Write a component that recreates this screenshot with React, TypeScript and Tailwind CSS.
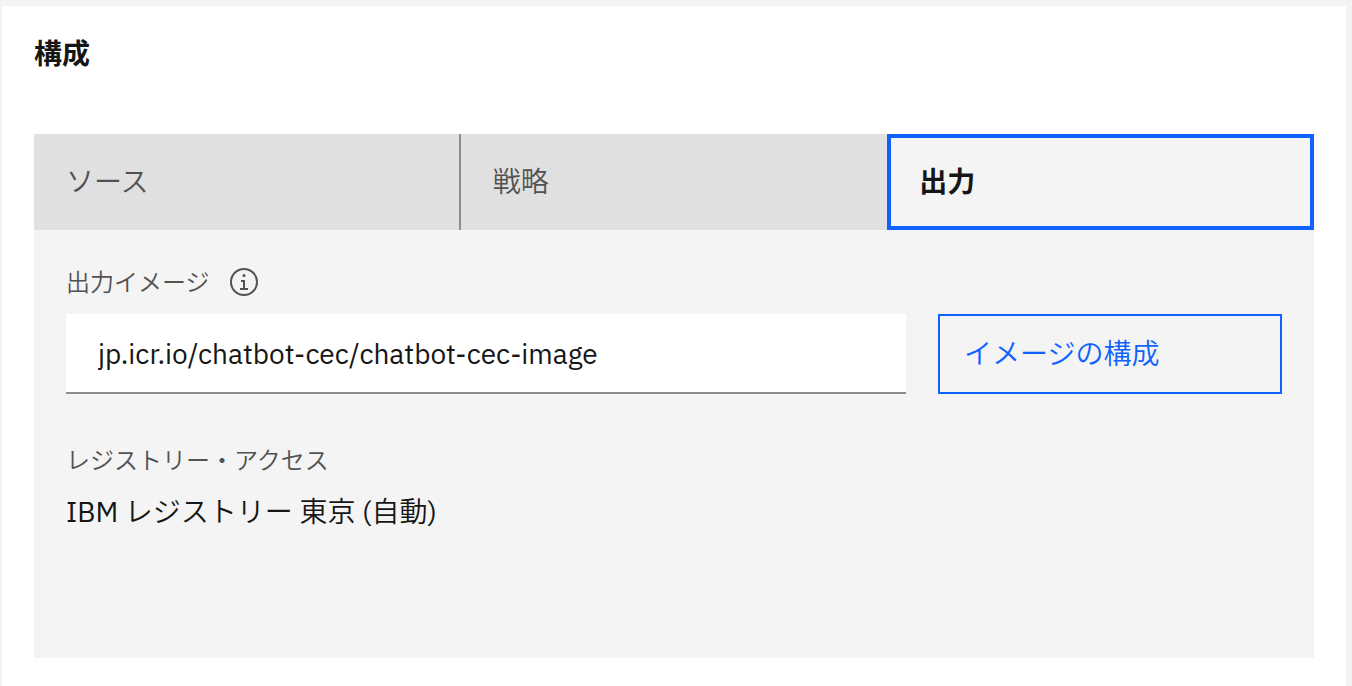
import { useState } from "react";
import clsx from "clsx";

const tabs = [
  { id: "source", label: "ソース" },
  { id: "strategy", label: "戦略" },
  { id: "output", label: "出力" },
];

function InfoIcon() {
  return (
    <svg viewBox="0 0 32 32" className="size-8" fill="currentColor" aria-hidden="true">
      <path d="M17 22v-8h-4v2h2v6h-3v2h8v-2zM16 8a1.5 1.5 0 1 0 1.5 1.5A1.5 1.5 0 0 0 16 8z" />
      <path d="M16 30a14 14 0 1 1 14-14 14 14 0 0 1-14 14zm0-26a12 12 0 1 0 12 12A12 12 0 0 0 16 4z" />
    </svg>
  );
}

function OutputPanel() {
  const [image, setImage] = useState("jp.icr.io/chatbot-cec/chatbot-cec-image");

  return (
    <>
      <div className="mb-4 flex h-8 items-center gap-[18px] text-2xl text-[#525252]">
        <label htmlFor="output-image" className="font-[350]">出力イメージ</label>
        <button type="button" aria-label="出力イメージの情報">
          <InfoIcon />
        </button>
      </div>
      <div className="flex gap-8">
        <input
          id="output-image"
          type="text"
          value={image}
          onChange={(e) => setImage(e.target.value)}
          className="h-20 min-w-0 flex-1 border-b-2 border-[#8d8d8d] bg-white px-8 outline-none"
        />
        <button
          type="button"
          className="h-20 w-[344px] border-2 border-[#0f62fe] px-6 text-left font-[350] text-[#0f62fe]"
        >
          イメージの構成
        </button>
      </div>
      <dl className="mt-12">
        <dt className="text-2xl leading-9 font-[350] text-[#525252]">レジストリー・アクセス</dt>
        <dd className="mt-4 leading-9">
          IBM <span className="font-[350]">レジストリー 東京</span> (<span className="font-[350]">自動</span>)
        </dd>
      </dl>
    </>
  );
}

export default function App() {
  const [active, setActive] = useState("output");

  return (
    <div className="min-h-screen bg-[#f4f4f4] pt-1.5 pr-1.5 pl-0.5 font-['IBM_Plex_Sans','Noto_Sans','Noto_Sans_CJK_JP',sans-serif] text-[28px] text-[#161616]">
      <main className="min-h-[calc(100vh-6px)] bg-white px-8 pt-7 pb-7">
        <h2 className="mb-15 leading-10 font-bold">構成</h2>
        <div role="tablist" aria-label="構成" className="grid grid-cols-3 bg-[#e0e0e0]">
          {tabs.map((tab, i) => (
            <button
              key={tab.id}
              type="button"
              role="tab"
              id={`tab-${tab.id}`}
              aria-selected={active === tab.id}
              onClick={() => setActive(tab.id)}
              className={clsx(
                "h-24 text-left",
                active === tab.id
                  ? "border-4 border-[#0f62fe] bg-[#f4f4f4] px-7 font-bold"
                  : "px-8 font-[350] text-[#525252]",
                i === 0 && active !== tab.id && "border-r-2 border-[#8d8d8d]"
              )}
            >
              {tab.label}
            </button>
          ))}
        </div>
        <section
          role="tabpanel"
          aria-labelledby={`tab-${active}`}
          className="min-h-[428px] bg-[#f4f4f4] px-8 pt-9 pb-32"
        >
          {active === "output" && <OutputPanel />}
        </section>
      </main>
    </div>
  );
}
